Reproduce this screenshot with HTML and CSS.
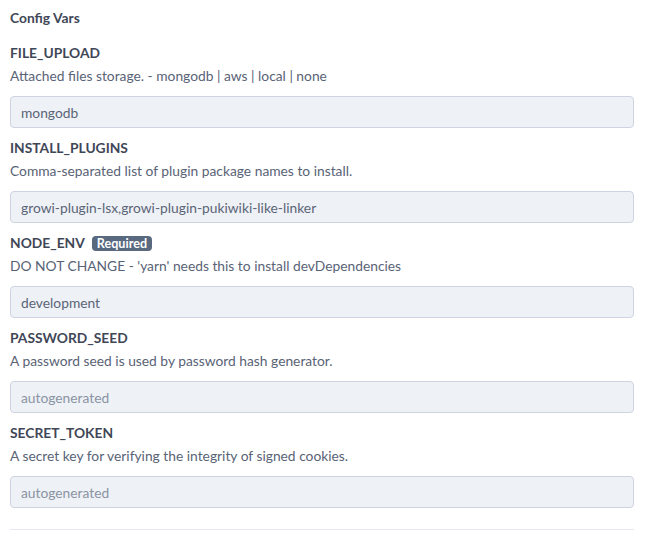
FILE: index.html
```html
<!DOCTYPE html>
<html lang="en">
<head>
    <meta charset="UTF-8">
    <title>Config Vars</title>
    <link rel="stylesheet" href="styles.css">
</head>
<body>
    <div class="config">
        <h5 class="config-title">Config Vars</h5>

        <div class="var">
            <div class="var-name">FILE_UPLOAD</div>
            <div class="var-desc">Attached files storage. - mongodb | aws | local | none</div>
            <input type="text" class="var-input" value="mongodb">
        </div>

        <div class="var">
            <div class="var-name">INSTALL_PLUGINS</div>
            <div class="var-desc">Comma-separated list of plugin package names to install.</div>
            <input type="text" class="var-input" value="growi-plugin-lsx,growi-plugin-pukiwiki-like-linker">
        </div>

        <div class="var">
            <div class="var-name">NODE_ENV <span class="badge">Required</span></div>
            <div class="var-desc">DO NOT CHANGE - 'yarn' needs this to install devDependencies</div>
            <input type="text" class="var-input" value="development">
        </div>

        <div class="var">
            <div class="var-name">PASSWORD_SEED</div>
            <div class="var-desc">A password seed is used by password hash generator.</div>
            <input type="text" class="var-input muted" value="autogenerated">
        </div>

        <div class="var">
            <div class="var-name">SECRET_TOKEN</div>
            <div class="var-desc">A secret key for verifying the integrity of signed cookies.</div>
            <input type="text" class="var-input muted" value="autogenerated">
        </div>

        <hr class="divider">
    </div>
</body>
</html>
```

FILE: styles.css
```css
body {
    margin: 0;
    background: #fff;
    font-family: Lato, "Open Sans", sans-serif;
    font-size: 13.8px;
    color: #3f4757;
}

.config {
    width: 624px;
    padding: 8px 10px 0;
}

.config-title {
    margin: 0 0 15px;
    font-size: 13.8px;
    line-height: 20px;
    font-weight: bold;
    color: #3f4757;
}

.var {
    margin-bottom: 10px;
}

.var-name {
    display: flex;
    align-items: center;
    gap: 7px;
    font-weight: bold;
    line-height: 20px;
    color: #3f4757;
}

.var-desc {
    margin-top: 3px;
    line-height: 20px;
    color: #596376;
}

.var-input {
    display: block;
    width: 100%;
    height: 32px;
    margin-top: 10px;
    padding: 0 10px;
    box-sizing: border-box;
    background: #eef1f6;
    border: 1px solid #cdd3e0;
    border-radius: 4px;
    font-family: inherit;
    font-size: 13.8px;
    color: #5b6577;
}

.var-input.muted {
    color: #8a93a3;
}

.badge {
    display: inline-block;
    height: 15px;
    padding: 0 5px;
    border-radius: 4px;
    background: #596980;
    color: #fff;
    font-size: 12.6px;
    line-height: 15px;
    font-weight: bold;
}

.divider {
    margin: 21px 0 0;
    border: 0;
    border-top: 1px solid #e6e9ef;
}
```
